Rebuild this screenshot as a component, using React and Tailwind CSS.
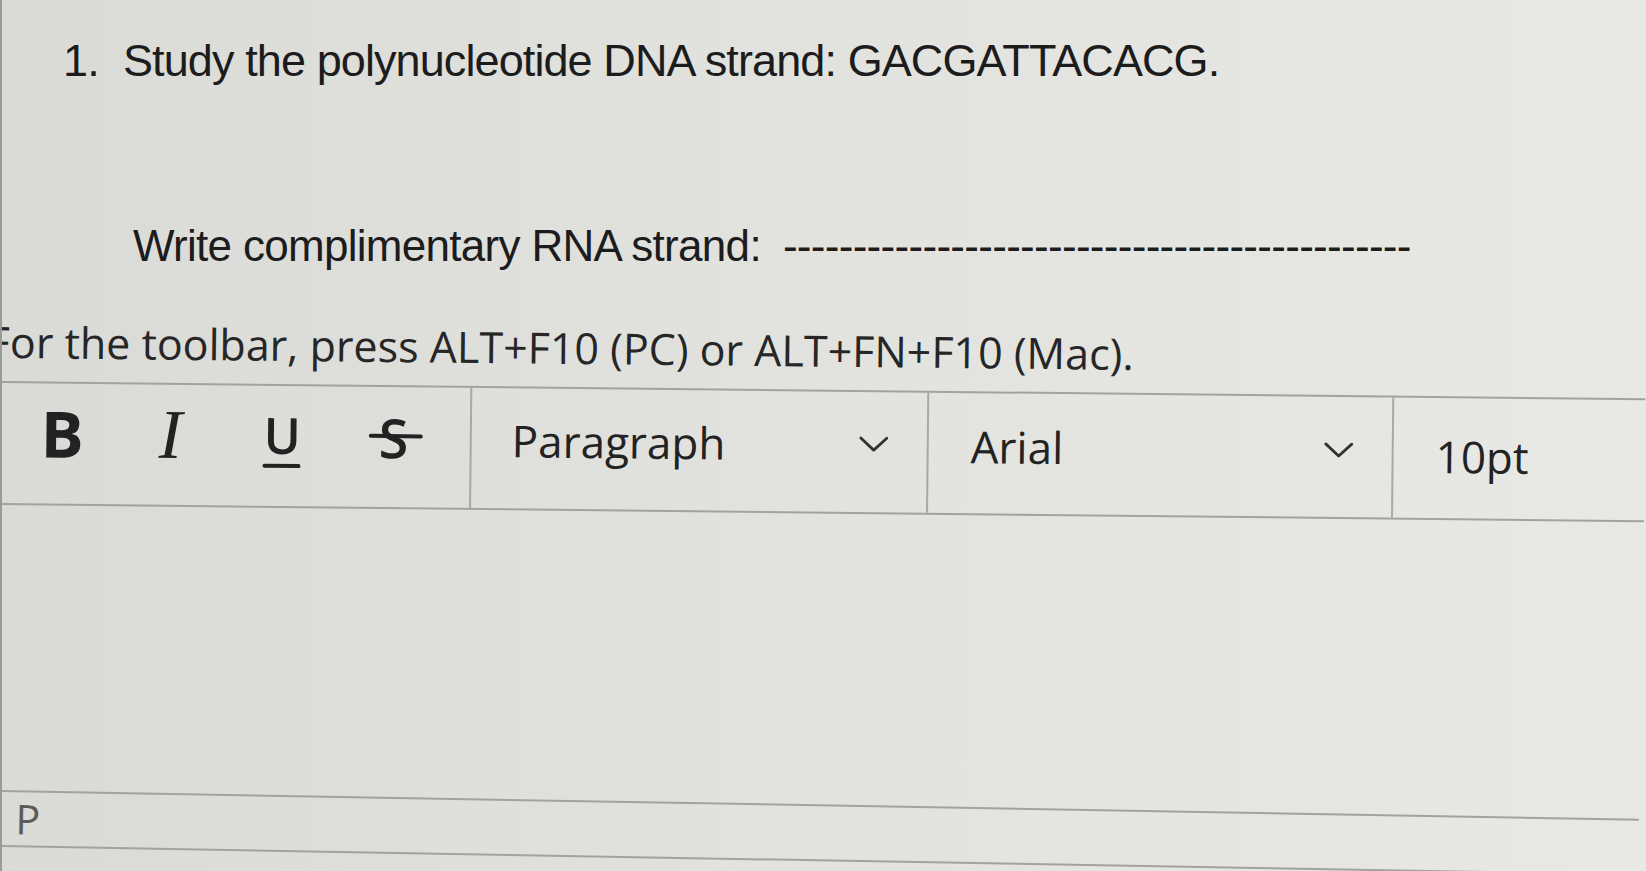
import React from "react";

function Chevron() {
  return (
    <svg width="30" height="18" viewBox="0 0 30 18" fill="none">
      <polyline points="2,3 15,15 28,3" stroke="#333" strokeWidth="2.8" strokeLinecap="round" strokeLinejoin="round" />
    </svg>
  );
}

export default function App() {
  const arial = { fontFamily: '"Liberation Sans", Arial, sans-serif' };
  const open = { fontFamily: '"Open Sans", "Noto Sans", sans-serif' };
  const dashes = "-".repeat(45);
  return (
    <div className="w-[1646px] h-[871px] overflow-hidden bg-linear-to-r from-[#dadad6] via-[#e2e2de] to-[#e8e8e5] border-l-2 border-[#9a9a96] text-[#1c1c1c]">
      <div className="pt-[38px] pl-[61px] flex items-center text-[45px] leading-none tracking-[-0.9px]" style={arial}>
        <span className="w-[60px]">1.</span>
        <span>Study the polynucleotide DNA strand: GACGATTACACG.</span>
      </div>

      <div className="mt-[141px] pl-[131px] flex items-center text-[44px] leading-none tracking-[-0.7px]" style={arial}>
        <span>Write complimentary RNA strand:</span>
        <span className="ml-[22px]">{dashes}</span>
      </div>

      <div className="mt-[52px] origin-top-left rotate-[0.6deg]">
        <div className="ml-[-14px] text-[43px] leading-none text-[#262626] whitespace-nowrap" style={open}>
          For the toolbar, press ALT+F10 (PC) or ALT+FN+F10 (Mac).
        </div>

        <div className="mt-[18px] h-[124px] border-y-2 border-[#a2a29e] flex items-stretch" style={open}>
          <div className="w-[471px] flex items-center pb-[21px] border-r-2 border-[#a8a8a4]">
            <span className="ml-[40px] w-[118px] text-[64px] font-bold leading-none text-[#222]">B</span>
            <span className="w-[104px] text-[70px] italic leading-none text-[#222]" style={{ fontFamily: '"Liberation Serif", "Times New Roman", serif' }}>I</span>
            <span className="w-[104px] flex flex-col items-start pt-[6px]">
              <span className="text-[50px] font-semibold leading-none text-[#222] pl-[1px]">U</span>
              <span className="mt-[4px] w-[38px] h-[4px] bg-[#222] rounded-full"></span>
            </span>
            <span className="relative text-[54px] font-semibold leading-none text-[#222] pl-[12px]">
              S
              <span className="absolute left-[2px] top-[24px] w-[54px] h-[4px] bg-[#222] rounded-full"></span>
            </span>
          </div>
          <div className="w-[457px] flex items-center justify-between pl-[40px] pr-[38px] pb-[17px] border-r-2 border-[#a8a8a4]">
            <span className="text-[44px] leading-none text-[#222]">Paragraph</span>
            <Chevron />
          </div>
          <div className="w-[465px] flex items-center justify-between pl-[42px] pr-[38px] pb-[15px] border-r-2 border-[#a8a8a4]">
            <span className="text-[44px] leading-none text-[#222]">Arial</span>
            <Chevron />
          </div>
          <div className="flex-1 flex items-center pl-[42px] pb-[4px]">
            <span className="text-[44px] leading-none text-[#222]">10pt</span>
          </div>
        </div>

        <div className="origin-top-left rotate-[0.4deg]">
          <div className="h-[285px]"></div>
          <div className="h-[57px] border-y-2 border-[#a2a29e] flex items-center pl-[21px]" style={open}>
            <span className="text-[41px] leading-none text-[#5a5a5a]">P</span>
          </div>
        </div>
      </div>
    </div>
  );
}
